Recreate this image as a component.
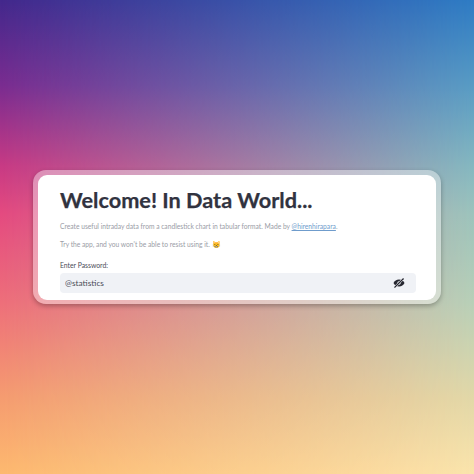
<main class="page">
  <section class="glass">
    <div class="card">
      <h1>Welcome! In Data World...</h1>
      <p class="first">Create useful intraday data from a candlestick chart in tabular format. Made by <a href="#top">@hirenhirapara</a>.</p>
      <p class="second">Try the app, and you won't be able to resist using it. <span class="emoji">😸</span></p>
      <label for="pw">Enter Password:</label>
      <div class="field">
        <input id="pw" value="@statistics" />
        <svg viewBox="0 0 24 24" width="12" height="12" aria-hidden="true">
          <path d="M12 5C7 5 3 8 1 12c2 4 6 7 11 7s9-3 11-7c-2-4-6-7-11-7z" fill="#262730"/>
          <circle cx="12" cy="12" r="3.4" fill="#f0f2f6"/>
          <path d="M3 21 21 3" stroke="#f0f2f6" stroke-width="4.4"/>
          <path d="M3.5 20.5 20.5 3.5" stroke="#262730" stroke-width="2.2" stroke-linecap="round"/>
        </svg>
      </div>
    </div>
  </section>
</main>

<style>
  :global(body) { margin: 0; }
  .page {
    position: relative;
    width: 474px;
    height: 474px;
    box-sizing: border-box;
    padding: 170px 33px 0;
    overflow: hidden;
    background: linear-gradient(to bottom, #43288c 0%, #7a2c90 18%, #c83a84 35%, #e44a80 45%, #ee6f7a 64%, #f59c70 84%, #fdb96f 100%);
    font-family: "Lato", "Noto Sans", sans-serif;
  }
  .page::before {
    content: "";
    position: absolute;
    inset: 0;
    background: linear-gradient(to bottom, #2e7cc4 0%, #589cc4 18%, #84b8c0 35%, #9cc4bc 45%, #b8d0b8 64%, #e2d8a8 84%, #fbe4ac 100%);
    -webkit-mask-image: linear-gradient(to right, transparent 0%, #000 100%);
    mask-image: linear-gradient(to right, transparent 0%, #000 100%);
  }
  .glass {
    position: relative;
    width: 408px;
    height: 134px;
    box-sizing: border-box;
    padding: 5px 5px 4px 5px;
    border-radius: 13px;
    background: rgba(255, 255, 255, 0.4);
    box-shadow: 0 2px 5px rgba(0, 0, 0, 0.28);
  }
  .card {
    box-sizing: border-box;
    height: 100%;
    padding: 10px 20px 0 22px;
    border-radius: 9px;
    background: #fff;
    color: #262730;
  }
  h1 {
    margin: 0;
    font-size: 21.7px;
    line-height: 30px;
    font-weight: 700;
    -webkit-text-stroke: 0.25px #31333f;
    color: #31333f;
    white-space: nowrap;
  }
  p {
    margin: 0;
    font-size: 6.7px;
    line-height: 10px;
    color: #9a9ca6;
    white-space: nowrap;
  }
  .first { margin-top: 6px; }
  .second { margin-top: 8px; }
  a { color: #6f9ccc; }
  .emoji { font-size: 7px; }
  label {
    display: block;
    margin-top: 11px;
    font-size: 6.8px;
    line-height: 10px;
    color: #4a4c57;
  }
  .field {
    display: flex;
    align-items: center;
    justify-content: space-between;
    height: 20px;
    margin-top: 3px;
    padding: 0 11px 0 5px;
    border-radius: 4px;
    background: #f0f2f6;
  }
  input {
    flex: 1;
    min-width: 0;
    border: 0;
    padding: 0;
    background: transparent;
    font: inherit;
    font-size: 8.3px;
    color: #4a4c57;
    outline: none;
  }
</style>
